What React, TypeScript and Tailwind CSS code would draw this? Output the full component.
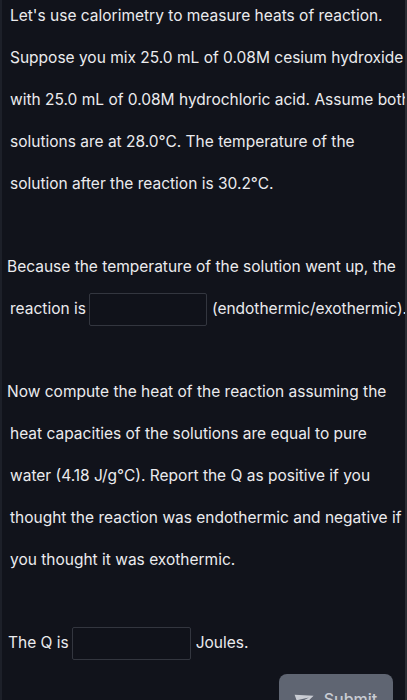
import React from 'react';

const Line: React.FC<{ children: React.ReactNode; className?: string }> = ({ children, className = '' }) => (
  <div className={`h-[42px] flex items-center whitespace-nowrap ${className}`}>{children}</div>
);

const Blank: React.FC = () => <div className="h-[41px]" />;

const AnswerBox: React.FC<{ w: string }> = ({ w }) => (
  <span className={`inline-block h-[33px] ${w} border border-[#33363f] bg-[#10121a] rounded-[2px]`} />
);

export default function App() {
  return (
    <div
      className="w-[407px] h-[700px] overflow-hidden bg-[#11131b] text-[#ebebee] text-[15.5px] relative border-l-[2px] border-[#1d2029]"
      style={{ fontFamily: 'Inter, "Liberation Sans", sans-serif' }}
    >
      <div className="absolute right-0 top-0 bottom-0 w-[2px] bg-[#2a2c33]" />
      <div className="-mt-[5px]">
        <div className="pl-[8px]">
          <Line>Let's use calorimetry to measure heats of reaction.</Line>
          <Line>Suppose you mix 25.0 mL of 0.08M cesium hydroxide</Line>
          <Line>with 25.0 mL of 0.08M hydrochloric acid. Assume both</Line>
          <Line>solutions are at 28.0°C. The temperature of the</Line>
          <Line>solution after the reaction is 30.2°C.</Line>
        </div>
        <Blank />
        <div className="pl-[5px]">
          <Line>Because the temperature of the solution went up, the</Line>
          <Line className="pl-[3px]">
            <span>reaction is</span>
            <span className="ml-[3px] mr-[5px] flex"><AnswerBox w="w-[118px]" /></span>
            <span>(endothermic/exothermic).</span>
          </Line>
        </div>
        <Blank />
        <div className="pl-[5px]">
          <Line>Now compute the heat of the reaction assuming the</Line>
          <div className="pl-[3px]">
            <Line>heat capacities of the solutions are equal to pure</Line>
            <Line>water (4.18 J/g°C). Report the Q as positive if you</Line>
            <Line>thought the reaction was endothermic and negative if</Line>
            <Line>you thought it was exothermic.</Line>
          </div>
        </div>
        <Blank />
        <div className="pl-[6px]">
          <Line>
            <span>The Q is</span>
            <span className="ml-[3px] mr-[5px] flex"><AnswerBox w="w-[119px]" /></span>
            <span>Joules.</span>
          </Line>
        </div>
        <div className="flex justify-end pr-[14px] mt-[10px]">
          <button className="w-[114px] h-[40px] rounded-[8px] bg-[#5f6572] flex items-start justify-center gap-[9px] pt-[13px] text-[#c9ccd3] text-[16px] font-medium">
            <svg width="20" height="20" viewBox="0 0 24 24" fill="#c9ccd3" className="-rotate-[20deg] mt-[2px]">
              <path d="M2 21 23 12 2 3v7l15 2-15 2z" />
            </svg>
            <span>Submit</span>
          </button>
        </div>
      </div>
    </div>
  );
}
